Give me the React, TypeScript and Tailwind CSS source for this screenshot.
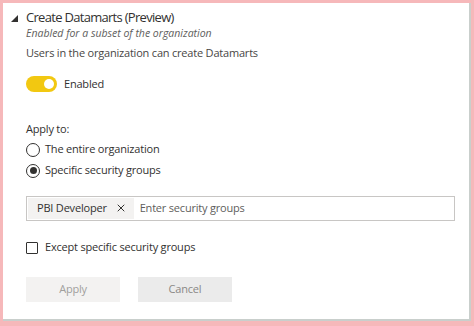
import { X } from "lucide-react";

export default function App() {
  return (
    <div className="w-[474px] h-[326px] bg-[#f6b8ba] pt-[3px] pl-[3px] pr-[3px] pb-[5px] font-['Open_Sans',sans-serif] text-[#323130]">
      <div className="h-full bg-white border-r-2 border-b-2 border-[#c9cfcc]">
        {/* Header */}
        <div className="flex items-start pl-[8px] pt-[5px]">
          <svg width="7" height="7" viewBox="0 0 7 7" className="mt-[7px] mr-[8px]">
            <polygon points="7,0 7,7 0,7" fill="#323130" />
          </svg>
          <div>
            <div className="text-[13px] leading-[18px] tracking-[-0.7px]">Create Datamarts (Preview)</div>
            <div className="text-[10.5px] italic leading-[15px] text-[#605e5c]">
              Enabled for a subset of the organization
            </div>
          </div>
        </div>

        <div className="pl-[23px] text-[11px] tracking-[-0.2px]">
          <div className="mt-[4px] leading-[16px] text-[#484644]">
            Users in the organization can create Datamarts
          </div>

          {/* Toggle */}
          <div className="flex items-center mt-[15px] gap-[7px]">
            <div className="w-[31px] h-[16px] rounded-full bg-[#f2c811] flex items-center justify-end pr-[3px]">
              <div className="w-[10px] h-[10px] rounded-full bg-white" />
            </div>
            <span>Enabled</span>
          </div>

          {/* Apply to */}
          <div className="mt-[28px] leading-[16px]">Apply to:</div>
          <div className="mt-[5px] flex flex-col gap-[5px]">
            <label className="flex items-center gap-[5px] h-[16px]">
              <span className="w-[14px] h-[14px] rounded-full border border-[#323130] bg-white" />
              The entire organization
            </label>
            <label className="flex items-center gap-[5px] h-[16px]">
              <span className="w-[14px] h-[14px] rounded-full border border-[#323130] bg-white flex items-center justify-center">
                <span className="w-[7px] h-[7px] rounded-full bg-[#323130]" />
              </span>
              Specific security groups
            </label>
          </div>

          {/* Picker */}
          <div className="mt-[17px] mr-[14px] h-[25px] border border-[#c8c6c4] flex items-center pl-[1px]">
            <div className="h-[21px] bg-[#f3f2f1] flex items-center pl-[9px] pr-[7px] gap-[8px]">
              PBI Developer
              <X size={12} strokeWidth={2} className="text-[#323130]" />
            </div>
            <span className="ml-[6px] text-[#605e5c]">Enter security groups</span>
          </div>

          {/* Checkbox */}
          <label className="flex items-center gap-[7px] mt-[20px] h-[14px]">
            <span className="w-[12px] h-[12px] border border-[#323130] rounded-[1px] bg-white" />
            Except specific security groups
          </label>

          {/* Buttons */}
          <div className="flex gap-[18px] mt-[22px]">
            <button className="w-[94px] h-[25px] bg-[#f3f2f1] text-[#a19f9d]">Apply</button>
            <button className="w-[94px] h-[25px] bg-[#ebebeb] text-[#8a8886]">Cancel</button>
          </div>
        </div>
      </div>
    </div>
  );
}
